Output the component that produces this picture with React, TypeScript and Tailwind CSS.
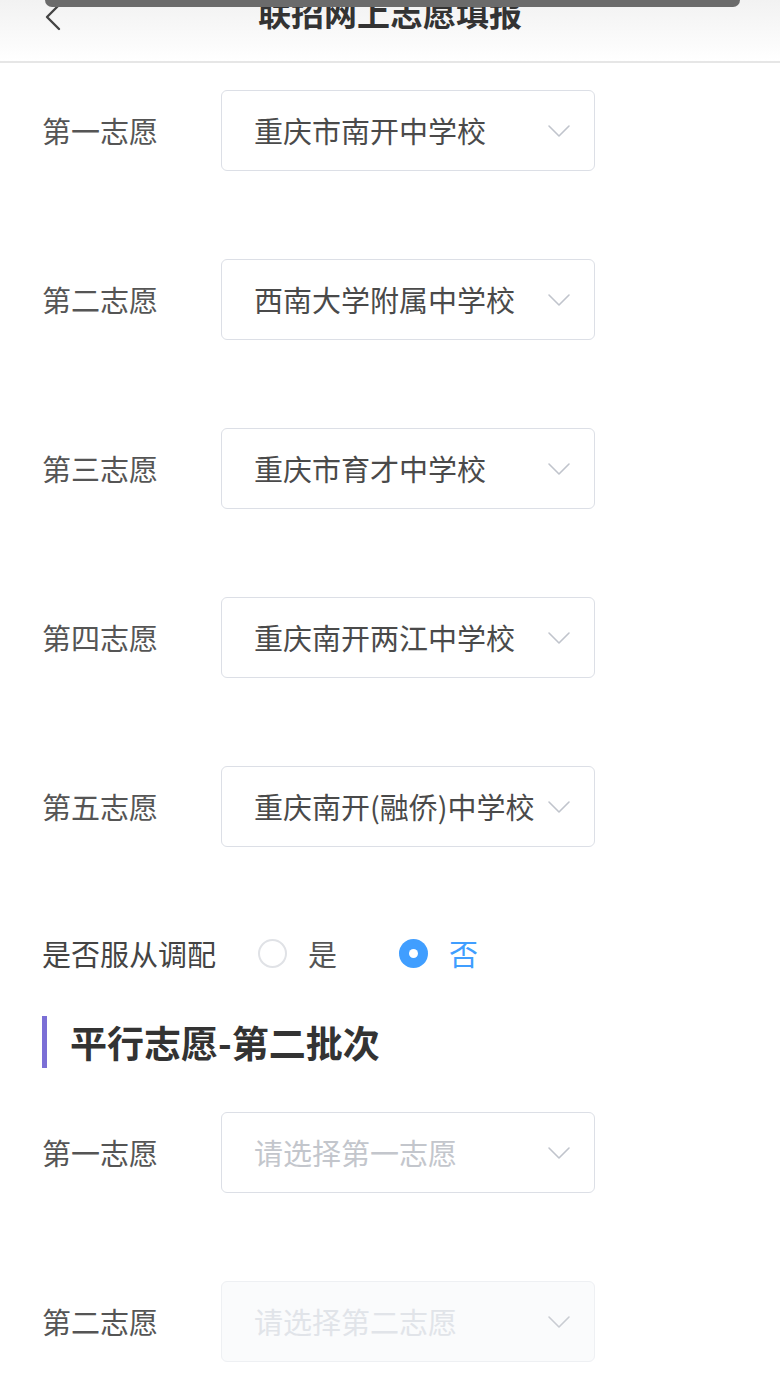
import React from 'react';

const firstBatch = [
  { label: '第一志愿', value: '重庆市南开中学校' },
  { label: '第二志愿', value: '西南大学附属中学校' },
  { label: '第三志愿', value: '重庆市育才中学校' },
  { label: '第四志愿', value: '重庆南开两江中学校' },
  { label: '第五志愿', value: '重庆南开(融侨)中学校' },
];

const Chevron = ({ color }: { color: string }) => (
  <svg width="24" height="14" viewBox="0 0 24 14" fill="none" stroke={color} strokeWidth={1.6} strokeLinecap="round" strokeLinejoin="round">
    <path d="M2 2l10 10 10-10" />
  </svg>
);

type RowProps = {
  label: string;
  value?: string;
  placeholder?: string;
  disabled?: boolean;
};

const SelectRow = ({ label, value, placeholder, disabled }: RowProps) => (
  <div className="flex items-center">
    <div className="w-[179px] shrink-0 text-[29px] leading-none text-[#555]">{label}</div>
    <div
      className={
        disabled
          ? 'flex h-[81px] w-[374px] items-center justify-between rounded-[6px] border-[1.5px] border-[#eef0f3] bg-[#fafbfc] pl-[32px] pr-[23px]'
          : 'flex h-[81px] w-[374px] items-center justify-between rounded-[6px] border-[1.5px] border-[#dcdfe6] bg-white pl-[32px] pr-[23px]'
      }
    >
      {value ? (
        <span className="whitespace-nowrap text-[29px] leading-none text-[#4a4a4a]">{value}</span>
      ) : (
        <span className={disabled ? 'text-[29px] leading-none text-[#e1e4e9]' : 'text-[29px] leading-none text-[#c3c6cc]'}>
          {placeholder}
        </span>
      )}
      <Chevron color={disabled ? '#c9ccd2' : '#c0c4cc'} />
    </div>
  </div>
);

export default function App() {
  return (
    <div
      className="relative min-h-[1377px] w-[780px] overflow-hidden bg-white"
      style={{ fontFamily: '"Noto Sans CJK SC", "Noto Sans", sans-serif' }}
    >
      <header className="relative h-[63px] border-b-2 border-[#e6e6e6] bg-gradient-to-b from-[#f2f2f2] to-white">
        <div className="flex h-full items-start">
          <div className="w-[180px] pl-[42px] pt-[2px]">
            <svg width="24" height="30" viewBox="0 0 24 30" fill="none" stroke="#444" strokeWidth={2.4} strokeLinecap="round" strokeLinejoin="round">
              <path d="M17 3L5 15l12 12" />
            </svg>
          </div>
          <h1 className="-mt-[4px] flex-1 pr-[180px] text-center text-[33px] font-bold leading-[33px] text-[#333]">
            联招网上志愿填报
          </h1>
        </div>
        <div className="absolute left-[45px] right-[40px] top-0 h-[7px] rounded-b-[14px] bg-[#6b6b6b]" />
      </header>

      <main className="pl-[42px]">
        <div className="mt-[27px] flex flex-col gap-[88px]">
          {firstBatch.map((r) => (
            <SelectRow key={r.label} label={r.label} value={r.value} />
          ))}
        </div>

        <div className="mt-[91px] flex h-[30px] items-center">
          <span className="w-[216px] text-[29px] leading-none text-[#444]">是否服从调配</span>
          <span className="h-[29px] w-[29px] rounded-full border-2 border-[#e0e2e6] bg-white" />
          <span className="ml-[21px] text-[29px] leading-none text-[#555]">是</span>
          <span className="ml-[62px] flex h-[29px] w-[29px] items-center justify-center rounded-full bg-[#409eff]">
            <span className="h-[9px] w-[9px] rounded-full bg-white" />
          </span>
          <span className="ml-[21px] text-[29px] leading-none text-[#409eff]">否</span>
        </div>

        <div className="mt-[48px] flex h-[52px] items-center">
          <span className="h-[52px] w-[5px] bg-[#7b6fd6]" />
          <h2 className="ml-[23px] text-[37px] font-bold leading-none text-[#333]">平行志愿-第二批次</h2>
        </div>

        <div className="mt-[44px] flex flex-col gap-[88px]">
          <SelectRow label="第一志愿" placeholder="请选择第一志愿" />
          <SelectRow label="第二志愿" placeholder="请选择第二志愿" disabled />
        </div>
      </main>
    </div>
  );
}
